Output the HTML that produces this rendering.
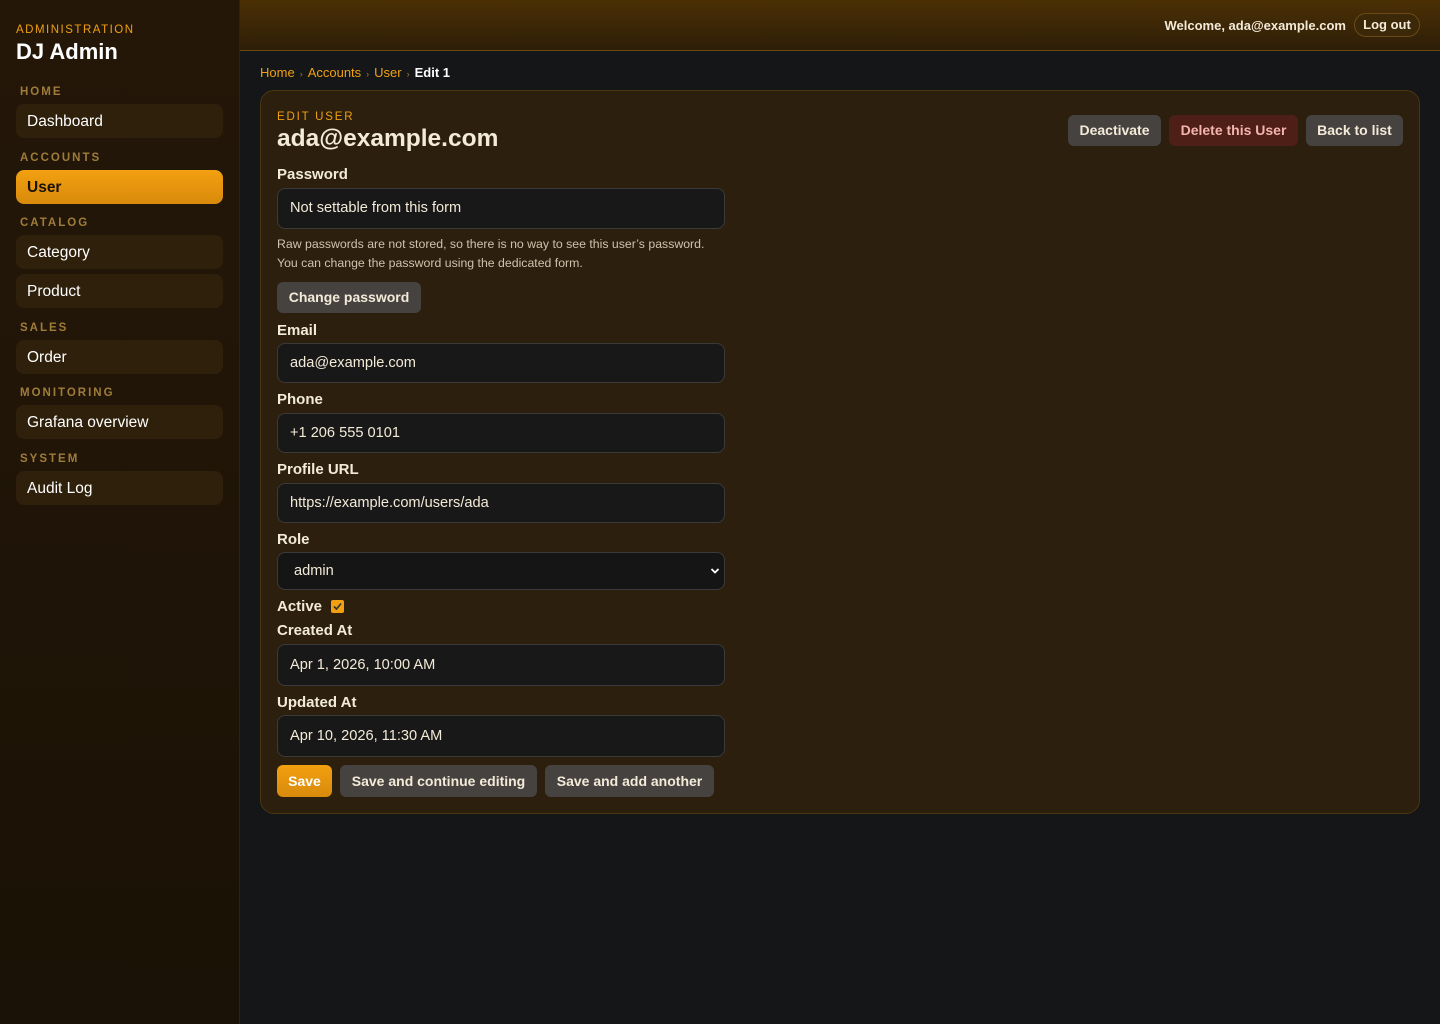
<!DOCTYPE html>
<html><head><meta charset="utf-8"><style>
*{box-sizing:border-box;margin:0;padding:0}
body{width:1440px;height:1024px;background:#151617;font-family:"Liberation Sans",sans-serif;color:#f3ead8;position:relative;overflow:hidden}
.side{position:absolute;left:0;top:0;width:240px;height:1024px;background:linear-gradient(180deg,#241708,#1a1206);border-right:1px solid #2e2210}
.adm{position:absolute;left:16px;top:24px;font-size:11.5px;letter-spacing:1.5px;color:#f0a010}
.dj{position:absolute;left:16px;top:39px;font-size:22px;font-weight:bold;color:#fff}
.sec{position:absolute;left:20px;font-size:11.5px;font-weight:bold;letter-spacing:2px;color:#a07c3a}
.nav{position:absolute;left:16px;width:207px;height:34px;border-radius:8px;background:#2e200b;font-size:15.5px;padding-left:11px;line-height:36px;color:#fff}
.nav.on{background:linear-gradient(180deg,#f3a010,#d88a0c);color:#1a1206;font-weight:bold}
.top{position:absolute;left:240px;top:0;right:0;height:51px;background:linear-gradient(180deg,#4b3005,#2e1e08);border-bottom:1px solid #6b4a10}
.wel{position:absolute;right:94px;top:18px;font-size:13px;font-weight:bold}
.lo{position:absolute;right:20px;top:13px;height:24px;width:66px;border:1px solid #6b4a18;border-radius:12px;background:#3a2808;font-size:13px;font-weight:bold;text-align:center;line-height:22px}
.bc{position:absolute;left:260px;top:65px;font-size:13px;color:#f0a010}
.bc b{color:#fff}.bc i{font-style:normal;font-size:9px;color:#a07c3a;margin:0 5px}
.card{position:absolute;left:260px;top:90px;width:1160px;height:724px;background:#2d1f0d;border:1px solid #4a3510;border-radius:14px}
.a{position:absolute}
.eu{left:277px;top:111px;font-size:11.5px;letter-spacing:1.8px;color:#f0a010}
.h1{left:277px;top:125px;font-size:24.5px;font-weight:bold}
.lbl{position:absolute;left:277px;font-size:15px;font-weight:bold}
.in{position:absolute;left:277px;width:448px;border:1px solid #3a3a3a;border-radius:8px;background:#181818;font-size:14.6px;padding-left:12px;color:#f3ead8}
.help{left:277px;top:235px;font-size:12.3px;color:#cfc3ad;line-height:19px}
.btn{position:absolute;height:31px;border-radius:6px;background:#454240;font-size:14px;font-weight:bold;text-align:center;line-height:31px;color:#f3ead8}
</style></head><body>
<div class="side">
<div class="adm">ADMINISTRATION</div><div class="dj">DJ Admin</div>
<div class="sec" style="top:86px">HOME</div><div class="nav" style="top:104px">Dashboard</div>
<div class="sec" style="top:152px">ACCOUNTS</div><div class="nav on" style="top:170px">User</div>
<div class="sec" style="top:217px">CATALOG</div><div class="nav" style="top:235px">Category</div><div class="nav" style="top:274px">Product</div>
<div class="sec" style="top:322px">SALES</div><div class="nav" style="top:340px">Order</div>
<div class="sec" style="top:387px">MONITORING</div><div class="nav" style="top:405px">Grafana overview</div>
<div class="sec" style="top:453px">SYSTEM</div><div class="nav" style="top:471px">Audit Log</div>
</div>
<div class="top"><div class="wel">Welcome, ada@example.com</div><div class="lo">Log out</div></div>
<div class="bc">Home<i>›</i>Accounts<i>›</i>User<i>›</i><b>Edit 1</b></div>
<div class="card"></div>
<div class="a eu">EDIT USER</div><div class="a h1">ada@example.com</div>
<div class="btn" style="left:1068px;top:115px;width:93px">Deactivate</div>
<div class="btn" style="left:1169px;top:115px;width:129px;background:#4d1f16;color:#f5b4ae">Delete this User</div>
<div class="btn" style="left:1306px;top:115px;width:97px">Back to list</div>
<div class="lbl" style="top:166px">Password</div>
<div class="in" style="top:188px;height:41px;line-height:39px">Not settable from this form</div>
<div class="a help">Raw passwords are not stored, so there is no way to see this user’s password.<br>You can change the password using the dedicated form.</div>
<div class="btn" style="left:277px;top:282px;width:144px">Change password</div>
<div class="lbl" style="top:322px">Email</div>
<div class="in" style="top:343px;height:40px;line-height:38px">ada@example.com</div>
<div class="lbl" style="top:391px">Phone</div>
<div class="in" style="top:413px;height:40px;line-height:38px">+1 206 555 0101</div>
<div class="lbl" style="top:461px">Profile URL</div>
<div class="in" style="top:483px;height:40px;line-height:38px">https://example.com/users/ada</div>
<div class="lbl" style="top:531px">Role</div>
<div class="in" style="top:552px;height:38px;line-height:36px;padding-left:16px;background:#151515">admin<svg style="position:absolute;right:4px;top:14px" width="10" height="8" viewBox="0 0 10 8"><path d="M1.5 2l3.5 3.5L8.5 2" stroke="#fff" stroke-width="1.8" fill="none"/></svg></div>
<div class="lbl" style="top:598px">Active</div>
<div class="a" style="left:331px;top:600px;width:13px;height:13px;background:#f0a010;border-radius:2px"><svg width="13" height="13" viewBox="0 0 13 13"><path d="M3 6.5l2.5 2.5L10 3.5" stroke="#333" stroke-width="1.6" fill="none"/></svg></div>
<div class="lbl" style="top:622px">Created At</div>
<div class="in" style="top:644px;height:42px;line-height:40px">Apr 1, 2026, 10:00 AM</div>
<div class="lbl" style="top:694px">Updated At</div>
<div class="in" style="top:715px;height:42px;line-height:40px">Apr 10, 2026, 11:30 AM</div>
<div class="btn" style="left:277px;top:765px;width:55px;height:32px;line-height:32px;background:linear-gradient(180deg,#f3a010,#d88a0c);color:#fff">Save</div>
<div class="btn" style="left:340px;top:765px;width:197px;height:32px;line-height:32px">Save and continue editing</div>
<div class="btn" style="left:545px;top:765px;width:169px;height:32px;line-height:32px">Save and add another</div>
</body></html>
